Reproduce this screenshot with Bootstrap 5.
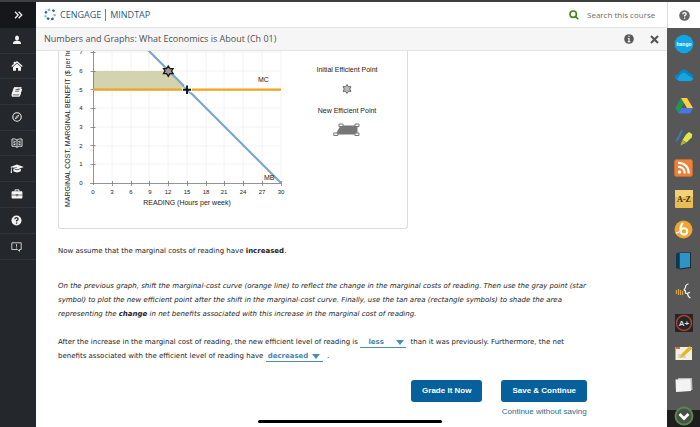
<!DOCTYPE html>
<html lang="en">
<head>
<meta charset="utf-8">
<meta name="viewport" content="width=device-width, initial-scale=1">
<title>MindTap - Numbers and Graphs</title>
<link href="https://cdn.jsdelivr.net/npm/bootstrap@5.3.0/dist/css/bootstrap.min.css" rel="stylesheet">
<style>
body{font-family:"DejaVu Sans",Verdana,sans-serif;font-size:7px;color:#222;background:#fff}
.shell{border-top:2px solid #403e40}
.side{width:36px;background:#24282c}
.side a,.tools a{color:#f4f4f4;line-height:1}
.side-toggle{height:26px;background:#15171b;color:#e8e8e8}
.side ul{height:232px}
.side li{border-bottom:1px solid #303438;padding-right:3px}
.tools{width:33px;background:#575757}
.tools-help{height:26px;background:#fff;border-left:1px solid #ddd}
.tools li{height:31px}
.tools li:last-child{background:linear-gradient(#575757 10px,#1e1e1e 10px)}
.brandbar{height:25px;font-family:"Open Sans",sans-serif}
.brand{color:#285a7c;font-size:9px}
.brand-sep{width:1px;height:12px;background:#6f8797}
.search{width:72px;font-size:8px;color:#666;outline:0}
.search::placeholder{color:#6b6b6b;opacity:1}
.titlebar{height:24px;background:#f6f6f6;border:solid #e4e4e4;border-width:1px 0;font-family:"Open Sans",sans-serif}
.titlebar h1{font-size:9px;color:#505050}
.panel{width:350px;height:178px;margin-left:22px;border:1px solid #ddd;border-top:0;border-radius:0 0 3px 3px;font-family:"Liberation Sans",Arial,sans-serif}
.legend{width:112px;font-size:7px;line-height:8px;color:#222;padding-top:15px}
.copy{padding:11px 22px 0;line-height:14px;max-width:579px}
.copy p{margin:0 0 14px}
.copy .lead-in{margin-bottom:21px}
.pick{border-bottom:1px solid #4a8cba;color:#4a84ac;line-height:10px;vertical-align:baseline}
.pick select{appearance:none;background:none;border:0;padding:0;color:inherit;font:bold 7px/10px "DejaVu Sans",Verdana,sans-serif;outline:0}
.pick-short{width:46px}
.pick-short select{width:32px;text-align:center}
.pick-long{width:57px}
.pick-long select{width:46px;padding-left:2px}
.actions{font-family:"Liberation Sans",Arial,sans-serif;padding:9px 80px 0 0;gap:19px}
.act{background:#06609b;color:#fff;border:0;border-radius:3px;font-size:8px;line-height:12px;font-weight:700;padding:5px 11px}
.act:hover{background:#044f80;color:#fff}
.skip{color:#2a6c96;font-size:8px;line-height:12px;margin-top:4px;white-space:nowrap}
.side svg,.tools svg,.brandbar svg,.titlebar svg,.pick svg{display:block;flex:none}
.homebar{left:50%;bottom:4px;width:184px;height:3px;margin-left:-92px;background:#000}
</style>
<script src="https://cdn.jsdelivr.net/npm/bootstrap@5.3.0/dist/js/bootstrap.bundle.min.js"></script>
</head>
<body>
<div class="shell d-flex vh-100 overflow-hidden position-relative">
<nav class="side flex-shrink-0" aria-label="Course">
<button class="side-toggle btn p-0 border-0 rounded-0 w-100 d-flex align-items-center justify-content-center" aria-label="Expand menu"><svg width="9" height="8" viewBox="0 0 9 8" fill="none" stroke="#eee" stroke-width="1.3"><path d="M1 .7 4.2 4 1 7.3M4.6.7 7.8 4 4.6 7.3"/></svg></button>
<ul class="list-unstyled m-0 d-flex flex-column">
<li class="flex-fill d-flex align-items-center justify-content-center"><a href="#" aria-label="Profile"><svg width="10" height="10" viewBox="0 0 10 10" fill="currentColor"><ellipse cx="5" cy="3" rx="2" ry="2.6"/><path d="M1 9V7.700Q1 6.500 4 5.800h2Q9 6.500 9 7.700V9z"/></svg></a></li>
<li class="flex-fill d-flex align-items-center justify-content-center"><a href="#" aria-label="Home"><svg width="12" height="10" viewBox="0 0 12 10" fill="currentColor"><path d="M6 0 11.700 5l-.8.9L6 1.700 1.100 5.900.3 5 2.700 2.900V.7h1.800v.6z"/><path d="M2 5.900 6 2.400l4 3.500v3.900H7V7H5v2.800H2z"/></svg></a></li>
<li class="flex-fill d-flex align-items-center justify-content-center"><a href="#" aria-label="Book"><svg width="11" height="10" viewBox="0 0 11 10"><path d="M3.300.5h7L8.200 7.300H2.200L1.500 8.800H8.500L10.500 2" fill="#f4f4f4" stroke="#f4f4f4" stroke-width=".7"/><path d="M3.400.5 1 7.300v1.900h7.500l2.100-6.900M1.500 7h3L6 1H3.400z" fill="#f4f4f4" stroke="#f4f4f4" stroke-width=".8"/><path d="M4.600 2.500h4M4.100 4.200h4M2 7.900h6" stroke="#25282d" stroke-width=".7"/></svg></a></li>
<li class="flex-fill d-flex align-items-center justify-content-center"><a href="#" aria-label="Explore"><svg width="10" height="10" viewBox="0 0 10 10"><circle cx="5" cy="5" r="4.200" fill="none" stroke="#eee" stroke-width="1.100"/><path d="m7.300 2.500-1.400 3.300-3.200 1.700 1.400-3.300z" fill="#eee"/><circle cx="5" cy="5" r=".7" fill="#25282d"/></svg></a></li>
<li class="flex-fill d-flex align-items-center justify-content-center"><a href="#" aria-label="Reader"><svg width="12" height="10" viewBox="0 0 12 10" fill="none" stroke="#eee" stroke-width=".9"><path d="M6 2Q4 .3 1 1v7.300Q4 7.700 6 9.300 8 7.700 11 8.300V1Q8 .3 6 2zV9.300M2.300 3l2.300.5M2.300 4.700l2.300.5M2.300 6.300l2.300.5M9.700 3l-2.300.5M9.700 4.700l-2.300.5M9.700 6.300l-2.300.5"/></svg></a></li>
<li class="flex-fill d-flex align-items-center justify-content-center"><a href="#" aria-label="Courses"><svg width="14" height="10" viewBox="0 0 14 10" fill="currentColor"><path d="M7 .5 13.800 3 7 5.500 2.300 3.800 7 3.500V3L1.500 3.500 2 9H.7l.4-5.500L.2 3z"/><path d="M3.300 4.800 7 6.300l3.800-1.500v2.500Q7 9.500 3.300 7.300z"/></svg></a></li>
<li class="flex-fill d-flex align-items-center justify-content-center"><a href="#" aria-label="Career"><svg width="12" height="10" viewBox="0 0 12 10"><path d="M4 2.500V.9h4v1.600" fill="none" stroke="#f4f4f4"/><rect x=".6" y="2.300" width="10.800" height="7.200" rx=".8" fill="#f4f4f4"/><path d="M.6 6h4.200M7.200 6h4.200M5 5.500h2v1.300H5z" stroke="#25282d" stroke-width=".6" fill="none"/></svg></a></li>
<li class="flex-fill d-flex align-items-center justify-content-center"><a href="#" aria-label="Help"><svg width="11" height="11" viewBox="0 0 11 11"><circle cx="5.500" cy="5.500" r="5" fill="#f4f4f4"/><path d="M3.800 4.300Q3.900 2.700 5.500 2.700t1.700 1.400Q7.200 5 5.600 5.700v.8M5.600 7.500v1.200" fill="none" stroke="#25282d" stroke-width="1.300"/></svg></a></li>
<li class="flex-fill d-flex align-items-center justify-content-center"><a href="#" aria-label="Feedback"><svg width="11" height="10" viewBox="0 0 11 10" fill="none" stroke="#ddd" stroke-width=".9"><path d="M.8.800h9.400V7.500H8.500V9.300L6.500 7.500H.8zM5.500 2.200v2.500M5.500 5.500v1"/></svg></a></li>
</ul>
</nav>
<div class="flex-fill d-flex flex-column overflow-hidden">
<header class="brandbar flex-shrink-0 d-flex align-items-center justify-content-between ps-2 pe-2">
<div class="brand d-flex align-items-center gap-1">
<svg width="12" height="13" viewBox="0 0 12 13" fill="none" stroke-width="2.200"><path d="M3.800 2.400 6.200 1.300" stroke="#7dbcc0"/><path d="m8.500 1.800 2 1.700" stroke="#2b6f9d"/><path d="m1.200 5.200 1.500-1.900" stroke="#2b6f9d"/><path d="m10.300 6 .6 2.300" stroke="#7dbcc0"/><path d="m1.300 7.200.4 2" stroke="#7dbcc0"/><path d="m3.200 9.800 1.800 1.500" stroke="#225f8c"/><path d="m7.300 11.600 2.200-1.300" stroke="#225f8c"/></svg>
<span>CENGAGE</span><span class="brand-sep"></span><span>MINDTAP</span>
</div>
<label class="d-flex align-items-center gap-1"><svg width="10" height="10" viewBox="0 0 10 10" fill="none" stroke="#42851f" stroke-width="1.600"><circle cx="4.200" cy="4.200" r="3.200"/><path d="m6.400 6.400 2.900 2.900"/></svg>
<input class="search border-0 p-0 bg-transparent ms-1" type="text" placeholder="Search this course" aria-label="Search this course"></label>
</header>
<div class="titlebar flex-shrink-0 d-flex align-items-center px-2">
<h1 class="m-0 fw-normal flex-fill">Numbers and Graphs: What Economics is About (Ch 01)</h1>
<button class="btn p-0 border-0 me-3" aria-label="Information"><svg width="10" height="10" viewBox="0 0 10 10"><circle cx="5" cy="5" r="4.800" fill="#595959"/><path d="M5 1.700v1.400M3.800 4.500H5v3M3.700 7.600h2.700" fill="none" stroke="#f4f4f4" stroke-width="1.200"/></svg></button>
<button class="btn p-0 border-0" aria-label="Close"><svg width="9" height="9" viewBox="0 0 9 9" stroke="#555" stroke-width="2.100"><path d="m1 1 7 7M8 1 1 8"/></svg></button>
</div>
<main class="flex-fill overflow-hidden">
<section class="panel d-flex">
<svg class="flex-shrink-0" width="232" height="177" viewBox="59 51 232 177" role="img" aria-label="Marginal cost and marginal benefit graph">
<path d="M112 51V183M131 51V183M149 51V183M168 51V183M187 51V183M206 51V183M224 51V183M243 51V183M262 51V183M281 51V183M93 52H281M93 71H281M93 108H281M93 127H281M93 146H281M93 164H281" stroke="#f2f2f2" fill="none"/>
<path d="M93 71H168L187 90H93z" fill="#d3d3ad"/>
<path d="M93.500 51V185M90 183.500H281M90.500 52.500h5M90.500 71.500h5M90.500 89.500h5M90.500 108.500h5M90.500 127.500h5M90.500 145.500h5M90.500 164.500h5M112.500 181v5M131.500 181v5M149.500 181v5M168.500 181v5M187.500 181v5M206.500 181v5M224.500 181v5M243.500 181v5M262.500 181v5M281.500 181v5" stroke="#777" stroke-width=".8" fill="none"/>
<path d="M93 89.700H281" stroke="#f0a11f" stroke-width="2.200"/>
<path d="M148 50 281 183" stroke="#7ba6c8" stroke-width="2.200"/>
<circle cx="187" cy="89.700" r="5" fill="#fff"/><path d="M183 86 191 94" stroke="#7ba6c8" stroke-width="1.500"/>
<path d="M187 85.500v8.500M183 89.700h8" stroke="#111" stroke-width="1.900"/>
<path d="m168.300 66 1.700 2.600h3.100L171.600 71l1.500 2.600H170l-1.700 2.600-1.700-2.600h-3.100L165 71l-1.500-2.400h3.100z" fill="#989898" stroke="#171717" stroke-width="1.300"/>
<g font-size="6" fill="#222" text-anchor="middle"><text x="81" y="54">7</text><text x="81" y="73">6</text><text x="81" y="92">5</text><text x="81" y="110">4</text><text x="81" y="129">3</text><text x="81" y="148">2</text><text x="81" y="166">1</text><text x="81" y="185">0</text>
<text x="93" y="194">0</text><text x="112" y="194">3</text><text x="131" y="194">6</text><text x="150" y="194">9</text><text x="168" y="194">12</text><text x="187" y="194">15</text><text x="206" y="194">18</text><text x="224" y="194">21</text><text x="243" y="194">24</text><text x="262" y="194">27</text><text x="281" y="194">30</text></g>
<g font-size="7" fill="#222"><text x="258" y="82">MC</text><text x="264" y="180">MB</text><text x="187" y="205" text-anchor="middle">READING (Hours per week)</text><text transform="translate(70 207) rotate(-90)">MARGINAL COST, MARGINAL BENEFIT ($ per hour)</text></g>
</svg>
<div class="legend d-flex flex-column align-items-center">
<span>Initial Efficient Point</span>
<svg class="mt-2 mb-2" width="10" height="17" viewBox="0 -2 10 17"><path d="m5 .5 1.400 2.200H9L7.700 5 9 7.300H6.400L5 9.500 3.600 7.300H1L2.300 5 1 2.700h2.600z" fill="#bbb" stroke="#666"/></svg>
<span>New Efficient Point</span>
<svg class="mt-2" width="28" height="14" viewBox="0 0 28 14"><path d="m7.500 2.500h17v9h-22z" fill="#777"/><g fill="#fff" stroke="#777"><path d="M6 1h4v2.500H6zM22 1h4v2.500h-4zM.800 10h4v2.500h-4zM22 10h4v2.500h-4z"/></g></svg>
</div>
</section>
<form class="copy">
<p class="lead-in pt-1">Now assume that the marginal costs of reading have <b>increased</b>.</p>
<p><i>On the previous graph, shift the marginal-cost curve (orange line) to reflect the change in the marginal costs of reading. Then use the gray point (star symbol) to plot the new efficient point after the shift in the marginal-cost curve. Finally, use the tan area (rectangle symbols) to shade the area representing the <b>change</b> in net benefits associated with this increase in the marginal cost of reading.</i></p>
<p class="mb-0">After the increase in the marginal cost of reading, the new efficient level of reading is <span class="pick pick-short d-inline-flex align-items-center"><select aria-label="Level of reading"><option>less</option><option>more</option></select><svg class="ms-1" width="8" height="5" viewBox="0 0 8 5"><path d="M0 0h8L4 5z" fill="#4a8cba"/></svg></span>&nbsp; than it was previously. Furthermore, the net benefits associated with the efficient level of reading have <span class="pick pick-long d-inline-flex align-items-center"><select aria-label="Net benefits"><option>decreased</option><option>increased</option></select><svg width="8" height="5" viewBox="0 0 8 5"><path d="M0 0h8L4 5z" fill="#4a8cba"/></svg></span>&nbsp; .</p>
</form>
<div class="actions d-flex justify-content-end align-items-start mt-2">
<button class="act btn">Grade It Now</button>
<div class="d-flex flex-column align-items-center"><button class="act btn">Save &amp; Continue</button><a class="skip text-decoration-none" href="#">Continue without saving</a></div>
</div>
</main>
</div>
<aside class="tools flex-shrink-0" aria-label="Apps">
<div class="tools-help d-flex align-items-center justify-content-center"><a href="#" aria-label="Help"><svg width="11" height="11" viewBox="0 0 11 11"><circle cx="5.500" cy="5.500" r="5.300" fill="#666"/><path d="M3.800 4.300Q3.900 2.700 5.500 2.700t1.700 1.400Q7.200 5 5.600 5.700v.8M5.600 7.500v1.200" fill="none" stroke="#fff" stroke-width="1.300"/></svg></a></div>
<ul class="list-unstyled m-0">
<li class="d-flex align-items-center justify-content-center"><a href="#"><svg width="20" height="20" viewBox="0 0 20 20"><circle cx="10" cy="10" r="9.300" fill="#10a5e4"/><text x="10" y="12" font-family="Liberation Sans" font-size="5" font-weight="700" fill="#fff" text-anchor="middle">hango</text></svg></a></li>
<li class="d-flex align-items-center justify-content-center"><a href="#" aria-label="Cloud drive"><svg width="20" height="14" viewBox="0 0 20 14"><path d="M3.500 12Q.5 11.500 1 8.500 1.500 6 4.500 6 5.500 2 9.500 1.500q3.500-.3 5 3Q18 5 19 9q.2 3.500-3 3.500z" fill="#0b83c5"/><path d="M3 11 7 6l3-1.500 9 6q-.5 2.500-3 2.500H5z" fill="#16a6df"/></svg></a></li>
<li class="d-flex align-items-center justify-content-center"><a href="#" aria-label="Drive"><svg width="18" height="16" viewBox="0 0 18 16"><path d="M6 0 9 5 3.500 15.500.3 10z" fill="#219653"/><path d="M6 0h6l6 10h-6z" fill="#ffce45"/><path d="M6.500 10H18l-3 5.500H3.500z" fill="#4777e5"/></svg></a></li>
<li class="d-flex align-items-center justify-content-center"><a href="#" aria-label="Highlighter"><svg width="18" height="18" viewBox="0 0 18 18"><path d="M6.500 1.500 8 2.500 3.500 12 1 14.500l.3-3.300z" fill="#3f78b0"/><path d="m14 4 3.300 2.200-.5 3-5.300 5.300L7.500 12l3.500-5.500z" fill="#dce94c"/><path d="m7.500 12 3.700 3-2 .8L5.500 17.500l.8-3z" fill="#a8b838"/></svg></a></li>
<li class="d-flex align-items-center justify-content-center"><a href="#" aria-label="RSS"><svg width="19" height="18" viewBox="0 0 19 18"><rect x=".5" y=".5" width="18" height="17" rx="2" fill="#e8823c" stroke="#c86b31"/><circle cx="5.500" cy="13" r="1.700" fill="#fff"/><path d="M4 7.800q6.500.2 6.800 6.700M4 3.800q10.500.5 10.800 10.700" fill="none" stroke="#fff" stroke-width="2.100"/></svg></a></li>
<li class="d-flex align-items-center justify-content-center"><a href="#"><svg width="18" height="18" viewBox="0 0 18 18"><rect width="18" height="18" rx="1" fill="#e9bd52"/><path d="M0 0h18v7H0z" fill="#f2d275"/><text x="9" y="12" font-family="Liberation Serif" font-size="8" font-weight="700" fill="#382b15" text-anchor="middle">A-Z</text></svg></a></li>
<li class="d-flex align-items-center justify-content-center"><a href="#" aria-label="Bookshelf"><svg width="19" height="19" viewBox="0 0 19 19"><circle cx="9.500" cy="9.500" r="9" fill="#f2a52d"/><path d="M9 3Q6 6 6.500 10.500q.5 4 3.500 4t3.300-3.200Q13 8.200 10 8.200t-3.400 3" fill="none" stroke="#fff" stroke-width="2.100"/><path d="M2 13q3 0 4-2" stroke="#fff" stroke-width="1.500" fill="none"/></svg></a></li>
<li class="d-flex align-items-center justify-content-center"><a href="#" aria-label="Glossary"><svg width="17" height="18" viewBox="0 0 17 18"><path d="M1 2 4 .5h12V16L5 17.500 1 16z" fill="#172d3b"/><path d="M4.500 1H15v14L4.500 16.500z" fill="#2f93c8"/><path d="M1 2 4.500 1v15.500L1 15z" fill="#0d394f"/></svg></a></li>
<li class="d-flex align-items-center justify-content-center"><a href="#" aria-label="Read aloud"><svg width="17" height="17" viewBox="0 0 17 17" fill="none"><path d="M1.500 7v4M3.500 6v6M5.500 7v5M7.500 8v4" stroke="#d9a23a" stroke-width="1.200"/><path d="M13.500.8q-3.300 1-3 3.700L9 7l1.400.6v2.600l2.100.2q.2 3.300 3 4.600M12.500 10.400l2.500-1.200" stroke="#eee" stroke-width="1.200"/></svg></a></li>
<li class="d-flex align-items-center justify-content-center"><a href="#"><svg width="18" height="18" viewBox="0 0 18 18"><rect width="18" height="18" fill="#292423"/><circle cx="9" cy="9" r="7.500" fill="none" stroke="#a54334" stroke-width="1.500"/><text x="9" y="12" font-family="Liberation Sans" font-size="8" font-weight="700" fill="#ddd" text-anchor="middle">A+</text></svg></a></li>
<li class="d-flex align-items-center justify-content-center"><a href="#" aria-label="Notes"><svg width="18" height="15" viewBox="0 0 18 15"><path d="M.5 1H17v13H.5z" fill="#f4f0dd"/><path d="M1 1h4v2H1z" fill="#d36a45"/><path d="m14.500 0 3 2.500-9 8L5 12l1.500-4z" fill="#e4b52e"/><path d="M3 9h4M3 11h8" stroke="#c9bb83"/></svg></a></li>
<li class="d-flex align-items-center justify-content-center"><a href="#" aria-label="Flashcards"><svg width="18" height="16" viewBox="0 0 18 16"><path d="M3 1h14l.5 12L4 14.500z" fill="#bbb"/><path d="M.5 2.500 15.500 2 16 14 1 15z" fill="#f3f3f3"/></svg></a></li>
<li class="d-flex align-items-center justify-content-center"><a href="#" aria-label="More apps"><svg width="20" height="20" viewBox="0 0 20 20"><circle cx="10" cy="10" r="8.500" fill="#48504a" stroke="#568848" stroke-width="2"/><path d="m5.500 8 4.500 4.500L14.500 8" fill="none" stroke="#fff" stroke-width="2.700"/></svg></a></li>
</ul>
</aside>
<div class="homebar position-absolute rounded-pill"></div>
</div>
</body>
</html>
